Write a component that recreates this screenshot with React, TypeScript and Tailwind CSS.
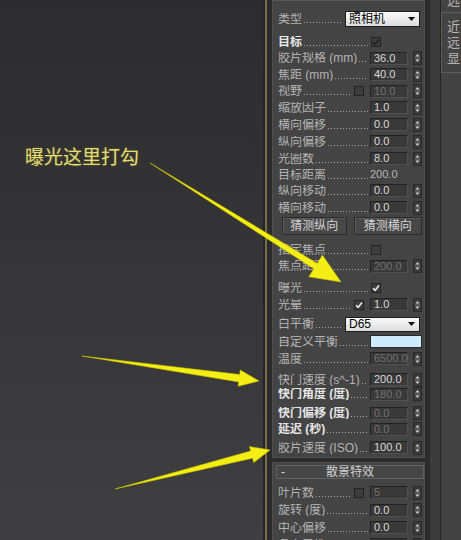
import type { ReactNode } from "react";

const PANEL_FONT = "font-['Liberation_Sans','Noto_Sans_CJK_SC',sans-serif]";

function Row({ h, children }: { h: string; children: ReactNode }) {
  return <div className={`flex items-center ${h}`}>{children}</div>;
}

function Label({ text, bold }: { text: string; bold?: boolean }) {
  return (
    <div className="flex min-w-0 flex-1 items-end overflow-hidden">
      <span
        className={
          bold
            ? "shrink-0 whitespace-nowrap text-[12px] leading-none font-bold text-[#e6e6e6]"
            : "shrink-0 whitespace-nowrap text-[12px] leading-none text-[#b4b4b4]"
        }
      >
        {text}
      </span>
      {/* dot leader */}
      <span className="mb-[2px] ml-[2px] mr-[2px] h-px min-w-0 flex-1 bg-[linear-gradient(to_right,#a8a8a8_1px,transparent_1px)] bg-[length:3px_1px]" />
    </div>
  );
}

function CheckBox({ on, dim, className = "" }: { on?: boolean; dim?: boolean; className?: string }) {
  return (
    <span
      className={`flex h-[10px] w-[10px] shrink-0 items-center justify-center border border-[#222] bg-[#3d3d3d] ${className}`}
    >
      {on && (
        <svg width="8" height="8" viewBox="0 0 8 8">
          <path
            d="M1 4.2 L3.1 6.4 L7 1.4"
            fill="none"
            stroke={dim ? "#1e1e1e" : "#eeeeee"}
            strokeWidth="1.6"
          />
        </svg>
      )}
    </span>
  );
}

function Spinner() {
  return (
    <svg width="9" height="14" viewBox="0 0 9 14" className="ml-[5px] shrink-0">
      <rect x="0.5" y="0.5" width="8" height="13" fill="#3a3a3a" stroke="#2a2a2a" />
      <path d="M2.4 5.6 L4.5 3 L6.6 5.6 Z" fill="#d2d2d2" />
      <line x1="2" y1="7" x2="7" y2="7" stroke="#8c8c8c" strokeWidth="0.8" />
      <path d="M2.4 8.4 L4.5 11 L6.6 8.4 Z" fill="#d2d2d2" />
    </svg>
  );
}

function Num({ value, off }: { value: string; off?: boolean }) {
  return (
    <div className="flex w-[52px] shrink-0 items-center">
      <span
        className={`flex h-[13px] w-[38px] shrink-0 items-center border border-t-[#222] border-l-[#222] border-r-[#505050] border-b-[#505050] bg-[#393939] pl-[3px] text-[11px] leading-none ${
          off ? "text-[#727272]" : "text-[#d8d8d8]"
        }`}
      >
        {value}
      </span>
      <Spinner />
    </div>
  );
}

function CheckCell({ on, dim }: { on?: boolean; dim?: boolean }) {
  return (
    <div className="flex w-[52px] shrink-0 items-center pl-px">
      <CheckBox on={on} dim={dim} />
    </div>
  );
}

function Select({ value, h }: { value: string; h: string }) {
  return (
    <div
      className={`mr-[2px] flex w-[75px] shrink-0 items-center justify-between border border-[#1c1c1c] bg-linear-to-b from-[#fbfbfb] to-[#dcdcdc] pl-[3px] pr-[4px] text-[12px] leading-none text-black ${h}`}
    >
      <span>{value}</span>
      <svg width="7" height="4" viewBox="0 0 7 4">
        <path d="M0 0 H7 L3.5 4 Z" fill="#111" />
      </svg>
    </div>
  );
}

function Button({ text, w }: { text: string; w: string }) {
  return (
    <div
      className={`flex h-[18px] items-center justify-center border border-[#2a2a2a] bg-[#474747] text-[12px] leading-none text-[#d4d4d4] shadow-[inset_1px_1px_0_#5a5a5a] ${w}`}
    >
      {text}
    </div>
  );
}

function Arrows() {
  return (
    <svg
      width="461"
      height="540"
      viewBox="0 0 461 540"
      className="pointer-events-none absolute inset-0"
    >
      <g fill="#f4ee14" stroke="#c7c000" strokeWidth="0.6" strokeLinejoin="round">
        <polygon points="150,163 317.3,263.4 322.4,255 341,282 308.8,276.8 313.8,268.8" />
        <polygon points="82,356 239.7,374.5 240.3,370.1 259,381 238.1,386.3 238.7,381.9" />
        <polygon points="115,489 250.6,451 249.5,446.6 270,450 253.7,462.6 252.6,458.2" />
      </g>
    </svg>
  );
}

export default function App() {
  return (
    <div className={`relative flex h-[540px] w-[461px] overflow-hidden ${PANEL_FONT}`}>
      {/* viewport area */}
      <div className="w-[263px] shrink-0 bg-linear-to-b from-[#2c2b2d] to-[#3f3f41] pl-[25px] pt-[146px]">
        <p className="font-['Noto_Sans_CJK_SC',sans-serif] text-[19px] leading-none text-[#e2dc7a] [text-shadow:0_0_2px_#6b6620]">
          曝光这里打勾
        </p>
      </div>
      <div className="w-[2px] shrink-0 bg-[#252525]" />
      <div className="w-[2px] shrink-0 bg-[#756c4b]" />

      {/* command panel */}
      <div className="flex w-[163px] shrink-0 flex-col bg-[#2c2c2c] px-[5px]">
        <div className="w-[153px] border border-t-[#595959] border-x-[#4f4f4f] border-b-[#4f4f4f] bg-[#444] pb-px pl-[5px] pr-[2px] pt-[9px]">
          <Row h="h-[17px]">
            <Label text="类型" />
            <Select value="照相机" h="h-[16px]" />
          </Row>
          <Row h="mt-[6px] h-[17px]">
            <Label text="目标" bold />
            <CheckCell on dim />
          </Row>
          <Row h="h-4">
            <Label text="胶片规格 (mm)" />
            <Num value="36.0" />
          </Row>
          <Row h="h-[17px]">
            <Label text="焦距 (mm)" />
            <Num value="40.0" />
          </Row>
          <Row h="h-4">
            <Label text="视野" />
            <CheckBox className="ml-[2px] mr-[6px]" />
            <Num value="10.0" off />
          </Row>
          <Row h="h-[17px]">
            <Label text="缩放因子" />
            <Num value="1.0" />
          </Row>
          <Row h="h-[17px]">
            <Label text="横向偏移" />
            <Num value="0.0" />
          </Row>
          <Row h="h-[17px]">
            <Label text="纵向偏移" />
            <Num value="0.0" />
          </Row>
          <Row h="h-[17px]">
            <Label text="光圈数" />
            <Num value="8.0" />
          </Row>
          <Row h="h-[15px]">
            <Label text="目标距离" />
            <span className="w-[52px] shrink-0 text-[11px] leading-none text-[#b4b4b4]">200.0</span>
          </Row>
          <Row h="h-[17px]">
            <Label text="纵向移动" />
            <Num value="0.0" />
          </Row>
          <Row h="h-[17px]">
            <Label text="横向移动" />
            <Num value="0.0" />
          </Row>
          <div className="mt-px flex gap-[7px] pl-[4px]">
            <Button text="猜测纵向" w="w-[65px]" />
            <Button text="猜测横向" w="w-[69px]" />
          </div>
          <Row h="mt-[7px] h-4">
            <Label text="指定焦点" />
            <CheckCell />
          </Row>
          <Row h="h-4">
            <Label text="焦点距离" />
            <Num value="200.0" off />
          </Row>
          <Row h="mt-[5px] h-[17px]">
            <Label text="曝光" />
            <CheckCell on />
          </Row>
          <Row h="h-[17px]">
            <Label text="光晕" />
            <CheckBox on className="ml-[2px] mr-[6px]" />
            <Num value="1.0" />
          </Row>
          <Row h="mt-[2px] h-[18px]">
            <Label text="白平衡 " />
            <Select value="D65" h="h-[15px]" />
          </Row>
          <Row h="h-[17px]">
            <Label text="自定义平衡 " />
            <span className="h-[13px] w-[52px] shrink-0 border border-[#2a2a2a] bg-[#cfeafc]" />
          </Row>
          <Row h="h-[17px]">
            <Label text="温度" />
            <Num value="6500.0" off />
          </Row>
          <Row h="mt-[5px] h-[15px]">
            <Label text="快门速度 (s^-1)" />
            <Num value="200.0" />
          </Row>
          <Row h="h-[14px]">
            <Label text="快门角度 (度)" bold />
            <Num value="180.0" off />
          </Row>
          <Row h="mt-[4px] h-4">
            <Label text="快门偏移 (度)" bold />
            <Num value="0.0" off />
          </Row>
          <Row h="h-4">
            <Label text="延迟 (秒)" bold />
            <Num value="0.0" off />
          </Row>
          <Row h="mt-[2px] h-[17px]">
            <Label text="胶片速度 (ISO)" />
            <Num value="100.0" />
          </Row>
        </div>

        <div className="mt-[4px] w-[153px] flex-1 border border-[#4f4f4f] bg-[#444] pt-[2px]">
          <div className="ml-[3px] flex h-[14px] items-center border border-[#626262] bg-[#474747] text-[12px] leading-none text-[#d2d2d2]">
            <span className="w-[16px] pl-[4px]">-</span>
            <span className="flex-1 pr-[16px] text-center">散景特效</span>
          </div>
          <div className="pl-[5px] pr-[2px] pt-[5px]">
            <Row h="h-[17px]">
              <Label text="叶片数" />
              <CheckBox className="ml-[2px] mr-[6px]" />
              <Num value="5" off />
            </Row>
            <Row h="h-[18px]">
              <Label text="旋转 (度)" />
              <Num value="0.0" />
            </Row>
            <Row h="h-[17px]">
              <Label text="中心偏移" />
              <Num value="0.0" />
            </Row>
            <Row h="h-[17px]">
              <Label text="各向异性" />
              <Num value="0.0" />
            </Row>
          </div>
        </div>
      </div>

      <div className="w-[10px] shrink-0 bg-[#3b3b3b]" />
      <div className="w-px shrink-0 bg-[#242424]" />

      {/* next column */}
      <div className="flex-1 overflow-hidden bg-[#434343] text-[13px] text-[#b6b6b6]">
        <div className="-mt-[7px] h-[15px] pl-[6px] leading-[15px]">远</div>
        <div className="mt-[4px] border-y border-l border-[#5e5e5e] pb-[5px] pl-[5px] pt-[6px] leading-[16px]">
          <div>近</div>
          <div>远</div>
          <div>显</div>
        </div>
      </div>

      <Arrows />
    </div>
  );
}
